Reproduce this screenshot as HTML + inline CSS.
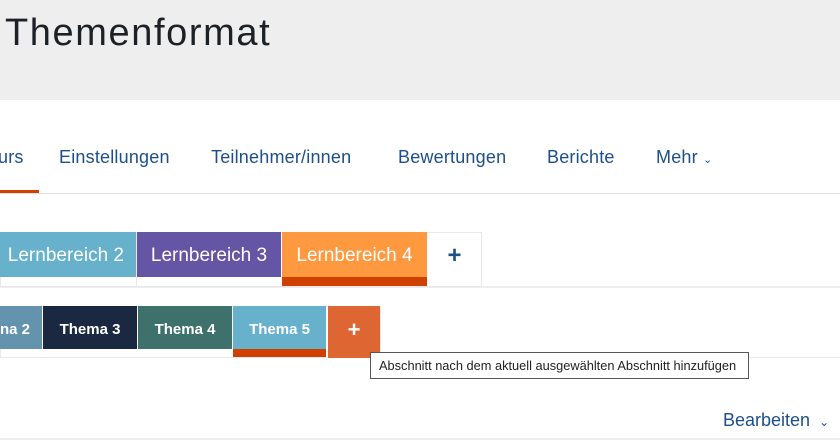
<!DOCTYPE html>
<html><head><style>
body{margin:0;width:840px;height:443px;overflow:hidden;background:#fff;font-family:"Liberation Sans",sans-serif;position:relative}
.a{position:absolute}
.hdr{left:0;top:0;width:840px;height:100px;background:#eeeeee}
.t{left:5px;top:12px;font-size:38px;color:#1d2125;letter-spacing:1.6px}
.nav{top:147px;font-size:18px;color:#1d4f8a;letter-spacing:0.2px}
.tab{position:absolute;color:#fff;text-align:center;box-sizing:border-box}
</style></head><body>
<div class="a hdr"></div>
<div class="a t">Themenformat</div>
<div class="a nav" style="left:-2px">urs</div>
<div class="a nav" style="left:59px">Einstellungen</div>
<div class="a nav" style="left:211px">Teilnehmer/innen</div>
<div class="a nav" style="left:398px">Bewertungen</div>
<div class="a nav" style="left:547px">Berichte</div>
<div class="a nav" style="left:656px">Mehr <span style="font-size:11px">&#8964;</span></div>
<div class="a" style="left:0;top:190px;width:39px;height:3px;background:#d04000"></div>
<div class="a" style="left:0;top:193px;width:840px;height:1px;background:#dee2e6"></div>

<div class="a" style="left:0;top:286px;width:840px;height:2px;background:#eee"></div>
<div class="a" style="left:0;top:232px;width:482px;height:55px;border:1px solid #e8e8e8;box-sizing:border-box"></div>
<div class="tab" style="left:0;top:232px;width:136px;height:45px;background:#67b1cd;font-size:19px;line-height:47px;text-align:right;padding-right:12px">Lernbereich 2</div>
<div class="tab" style="left:137px;top:232px;width:144px;height:45px;background:#6556a5;font-size:19px;line-height:47px">Lernbereich 3</div>
<div class="tab" style="left:282px;top:232px;width:145px;height:45px;background:#ff9940;font-size:19px;line-height:47px">Lernbereich 4</div>
<div class="a" style="left:282px;top:277px;width:145px;height:9px;background:#d04000"></div>
<div class="tab" style="left:428px;top:232px;width:53px;height:45px;color:#1d4f8a;font-size:24px;font-weight:bold;line-height:47px">+</div>
<div class="a" style="left:136px;top:232px;width:1px;height:55px;background:#e8e8e8"></div>

<div class="a" style="left:0;top:306px;width:381px;height:52px;border:1px solid #e8e8e8;box-sizing:border-box"></div>
<div class="a" style="left:380px;top:357px;width:460px;height:1px;background:#e8e8e8"></div>
<div class="tab" style="left:0;top:306px;width:42px;height:43px;background:#6493ae;font-size:15px;font-weight:bold;line-height:48px;text-align:right;padding-right:12px">na 2</div>
<div class="tab" style="left:43px;top:306px;width:94px;height:43px;background:#1a2842;font-size:15px;font-weight:bold;line-height:48px">Thema 3</div>
<div class="tab" style="left:138px;top:306px;width:94px;height:43px;background:#3f716c;font-size:15px;font-weight:bold;line-height:48px">Thema 4</div>
<div class="tab" style="left:233px;top:306px;width:93px;height:43px;background:#67b1cd;font-size:15px;font-weight:bold;line-height:48px">Thema 5</div>
<div class="a" style="left:233px;top:349px;width:93px;height:8px;background:#d04000"></div>
<div class="tab" style="left:328px;top:306px;width:52px;height:52px;background:#dd6633;font-size:22px;font-weight:bold;line-height:48px">+</div>
<div class="a" style="left:370px;top:352px;width:379px;height:27px;border:1px solid #555;background:#fff;box-sizing:border-box;font-size:12.8px;line-height:25px;padding-left:8px;color:#222;white-space:nowrap">Abschnitt nach dem aktuell ausgewählten Abschnitt hinzufügen</div>

<div class="a" style="left:723px;top:410px;font-size:18px;color:#1d4f8a">Bearbeiten <span style="font-size:12px;margin-left:4px">&#8964;</span></div>
<div class="a" style="left:0;top:438px;width:840px;height:2px;background:#eee"></div>
</body></html>
